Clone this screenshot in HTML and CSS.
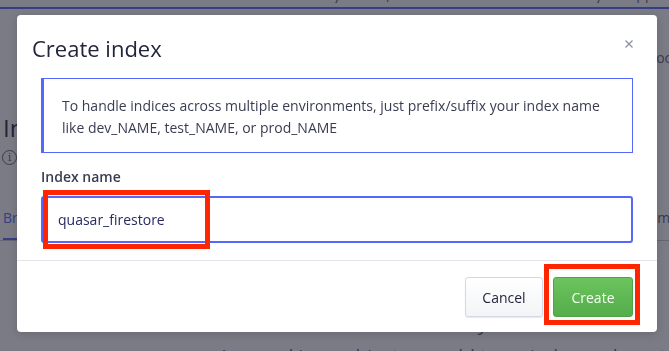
FILE: index.html
```html
<!DOCTYPE html>
<html lang="en">
<head>
    <meta charset="UTF-8">
    <meta name="viewport" content="width=device-width, initial-scale=1.0">
    <title>Create index</title>
    <link rel="stylesheet" href="styles.css">
</head>
<body>
    <div class="page">
        <p class="lead">Indices hold the records that you add, then make them searchable in your app</p>
        <div class="topbar"></div>
        <div class="side-link">Documentation</div>
        <h1 class="page-title">Indices</h1>
        <div class="page-info"><span class="info-icon">i</span></div>
        <div class="tabs">
            <span class="tab active">Browse</span>
            <span class="tab tab-far">Dimensions</span>
        </div>
        <p class="empty-title">Start with your first record</p>
        <p class="empty-text">A record is an object you add to an index and want to search for</p>
    </div>

    <div class="backdrop"></div>

    <div class="modal">
        <div class="modal-header">
            <h2>Create index</h2>
            <button class="close-btn" type="button" aria-label="Close">
                <svg width="8" height="8" viewBox="0 0 8 8">
                    <path d="M0.5 0.5 L7.5 7.5 M7.5 0.5 L0.5 7.5" stroke="#8a8ea3" stroke-width="1.2" fill="none"/>
                </svg>
            </button>
        </div>

        <div class="modal-body">
            <div class="notice">
                To handle indices across multiple environments, just prefix/suffix your index name
                like dev_NAME, test_NAME, or prod_NAME
            </div>

            <label for="indexName">Index name</label>
            <div class="field">
                <input type="text" id="indexName" value="quasar_firestore">
                <span class="highlight highlight-input"></span>
            </div>
        </div>

        <div class="modal-footer">
            <button type="button" class="btn btn-cancel">Cancel</button>
            <div class="field">
                <button type="button" class="btn btn-create">Create</button>
                <span class="highlight highlight-create"></span>
            </div>
        </div>
    </div>
</body>
</html>
```

FILE: styles.css
```css
:root {
    --primary: #23263b;
    --text: #3a3d52;
    --accent: #5468ff;
    --muted: #8a8ea3;
    --mark: #fe2600;
}

* {
    margin: 0;
    padding: 0;
    box-sizing: border-box;
    font-family: 'Open Sans', 'Noto Sans', sans-serif;
}

body {
    background: white;
    width: 669px;
    height: 351px;
    overflow: hidden;
}

/* page behind the dialog */
.page {
    padding-left: 3px;
    color: #5a5e75;
    overflow: hidden;
}

.lead {
    font-size: 14px;
    line-height: 16px;
    margin-top: -13px;
    padding-left: 140px;
    white-space: nowrap;
    overflow: hidden;
}

.topbar {
    margin-top: 4px;
    margin-left: -3px;
    border-bottom: 2px solid var(--accent);
}

.side-link {
    font-size: 14px;
    line-height: 20px;
    margin-top: 39px;
    padding-left: 643px;
    white-space: nowrap;
    overflow: hidden;
}

.page-title {
    font-size: 24px;
    font-weight: 400;
    line-height: 32px;
    margin-top: 44px;
    color: var(--primary);
}

.info-icon {
    display: inline-flex;
    justify-content: center;
    align-items: center;
    width: 15px;
    height: 15px;
    border: 1px solid #5a5e75;
    border-radius: 50%;
    font-size: 11px;
    font-family: 'DejaVu Serif', serif;
    margin-top: 4px;
    margin-left: -1px;
}

.tabs {
    display: flex;
    margin-top: 42px;
    margin-left: -3px;
    padding-left: 3px;
    border-bottom: 1px solid #c8c8d6;
    font-size: 14px;
    white-space: nowrap;
    overflow: hidden;
}

.tab {
    padding-bottom: 10px;
    line-height: 20px;
}

.tab.active {
    color: var(--accent);
    border-bottom: 2px solid var(--accent);
}

.tab-far {
    padding-left: 592px;
}

.empty-title {
    font-size: 20px;
    line-height: 26px;
    margin-top: 69px;
    padding-left: 380px;
    white-space: nowrap;
    overflow: hidden;
}

.empty-text {
    font-size: 19px;
    line-height: 24px;
    margin-top: 8px;
    padding-left: 215px;
    white-space: nowrap;
    overflow: hidden;
}

.backdrop {
    position: fixed;
    inset: 0;
    background: rgba(35, 35, 52, 0.6);
}

/* dialog */
.modal {
    position: absolute;
    top: 15px;
    left: 17px;
    width: 640px;
    background: white;
    border-radius: 4px;
    box-shadow: 0 2px 8px rgba(0, 0, 0, 0.15);
}

.modal-header {
    display: flex;
    justify-content: space-between;
    align-items: flex-start;
    padding: 18px 24px 0 15px;
}

.modal-header h2 {
    font-size: 22px;
    font-weight: 500;
    line-height: 30px;
    color: var(--primary);
}

.close-btn {
    display: flex;
    border: none;
    background: none;
    margin-top: 7px;
    cursor: pointer;
}

.modal-body {
    padding: 15px 24px 17px;
}

.notice {
    border: 1px solid var(--accent);
    border-left-width: 3px;
    padding: 16px 18px 13px;
    font-size: 14px;
    line-height: 22px;
    color: var(--text);
}

label {
    display: block;
    margin-top: 13px;
    margin-bottom: 8px;
    font-size: 14px;
    font-weight: 600;
    line-height: 22px;
    color: var(--text);
}

.field {
    position: relative;
}

input {
    display: block;
    width: 100%;
    height: 47px;
    padding: 0 15px;
    border: 2px solid var(--accent);
    border-radius: 3px;
    font-size: 14px;
    color: #262b63;
    outline: none;
}

.highlight {
    position: absolute;
    border: 5px solid var(--mark);
    pointer-events: none;
}

.highlight-input {
    top: -6px;
    left: 2px;
    width: 167px;
    height: 59px;
}

.highlight-create {
    top: -13px;
    left: -9px;
    width: 96px;
    height: 61px;
}

.modal-footer {
    display: flex;
    justify-content: flex-end;
    gap: 10px;
    border-top: 1px solid #e3e3ea;
    padding: 16px 24px 15px;
}

.btn {
    display: block;
    height: 40px;
    padding: 0 16px;
    border-radius: 3px;
    font-size: 14px;
    cursor: pointer;
}

.btn-cancel {
    width: 78px;
    color: var(--primary);
    background: linear-gradient(#ffffff, #f3f4f7);
    border: 1px solid #d6d6e7;
    box-shadow: 0 1px 1px rgba(35, 38, 59, 0.1);
}

.btn-create {
    width: 80px;
    color: #f4fff2;
    background: linear-gradient(#6cc45d, #55ad4c);
    border: 1px solid #4fa446;
}
```
